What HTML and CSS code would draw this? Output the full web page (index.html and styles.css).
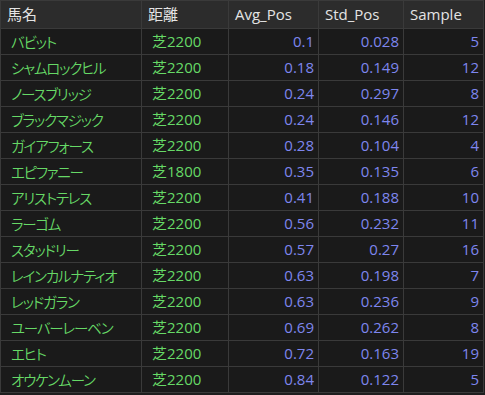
FILE: index.html
```html
<!DOCTYPE html>
<html lang="ja">
<head>
<meta charset="utf-8">
<link rel="stylesheet" href="styles.css">
</head>
<body>
<table class="grid">
  <colgroup>
    <col class="c-name"><col class="c-dist"><col class="c-avg"><col class="c-std"><col class="c-sample">
  </colgroup>
  <thead>
    <tr><th>馬名</th><th>距離</th><th>Avg_Pos</th><th>Std_Pos</th><th>Sample</th></tr>
  </thead>
  <tbody>
    <tr><td class="name">バビット</td><td class="dist">芝2200</td><td class="num">0.1</td><td class="num">0.028</td><td class="num">5</td></tr>
    <tr><td class="name">シャムロックヒル</td><td class="dist">芝2200</td><td class="num">0.18</td><td class="num">0.149</td><td class="num">12</td></tr>
    <tr><td class="name">ノースブリッジ</td><td class="dist">芝2200</td><td class="num">0.24</td><td class="num">0.297</td><td class="num">8</td></tr>
    <tr><td class="name">ブラックマジック</td><td class="dist">芝2200</td><td class="num">0.24</td><td class="num">0.146</td><td class="num">12</td></tr>
    <tr><td class="name">ガイアフォース</td><td class="dist">芝2200</td><td class="num">0.28</td><td class="num">0.104</td><td class="num">4</td></tr>
    <tr><td class="name">エピファニー</td><td class="dist">芝1800</td><td class="num">0.35</td><td class="num">0.135</td><td class="num">6</td></tr>
    <tr><td class="name">アリストテレス</td><td class="dist">芝2200</td><td class="num">0.41</td><td class="num">0.188</td><td class="num">10</td></tr>
    <tr><td class="name">ラーゴム</td><td class="dist">芝2200</td><td class="num">0.56</td><td class="num">0.232</td><td class="num">11</td></tr>
    <tr><td class="name">スタッドリー</td><td class="dist">芝2200</td><td class="num">0.57</td><td class="num">0.27</td><td class="num">16</td></tr>
    <tr><td class="name">レインカルナティオ</td><td class="dist">芝2200</td><td class="num">0.63</td><td class="num">0.198</td><td class="num">7</td></tr>
    <tr><td class="name">レッドガラン</td><td class="dist">芝2200</td><td class="num">0.63</td><td class="num">0.236</td><td class="num">9</td></tr>
    <tr><td class="name">ユーバーレーベン</td><td class="dist">芝2200</td><td class="num">0.69</td><td class="num">0.262</td><td class="num">8</td></tr>
    <tr><td class="name">エヒト</td><td class="dist">芝2200</td><td class="num">0.72</td><td class="num">0.163</td><td class="num">19</td></tr>
    <tr><td class="name">オウケンムーン</td><td class="dist">芝2200</td><td class="num">0.84</td><td class="num">0.122</td><td class="num">5</td></tr>
  </tbody>
</table>
</body>
</html>
```
FILE: styles.css
```css
html, body {
  margin: 0;
  padding: 0;
  background: #1e1e1e;
}
body {
  font-family: "Open Sans", "Noto Sans CJK JP", sans-serif;
  font-size: 15px;
}
.grid {
  table-layout: fixed;
  width: 484px;
  border-collapse: separate;
  border-spacing: 1px;
  background: #3a3a3a;
}
.c-name { width: 140px; }
.c-dist { width: 86px; }
.c-avg { width: 89px; }
.c-std { width: 84px; }
.c-sample { width: 79px; }
th {
  height: 27px;
  padding: 0 6px;
  background: #2c2c2c;
  color: #e4e4e4;
  font-weight: normal;
  text-align: left;
  white-space: nowrap;
  line-height: 27px;
}
td {
  height: 25px;
  padding: 0 6px;
  background: #1a1a1a;
  line-height: 25px;
  white-space: nowrap;
  overflow: hidden;
}
.name {
  color: #66d966;
  padding-left: 10px;
  font-size: 14.5px;
  letter-spacing: -1.2px;
  font-feature-settings: "palt";
  font-family: "Noto Sans CJK JP", sans-serif;
  font-weight: 350;
}
.dist {
  color: #66d966;
  padding-left: 10px;
}
.num {
  color: #7e86ee;
  text-align: right;
  padding-right: 4px;
}
```
